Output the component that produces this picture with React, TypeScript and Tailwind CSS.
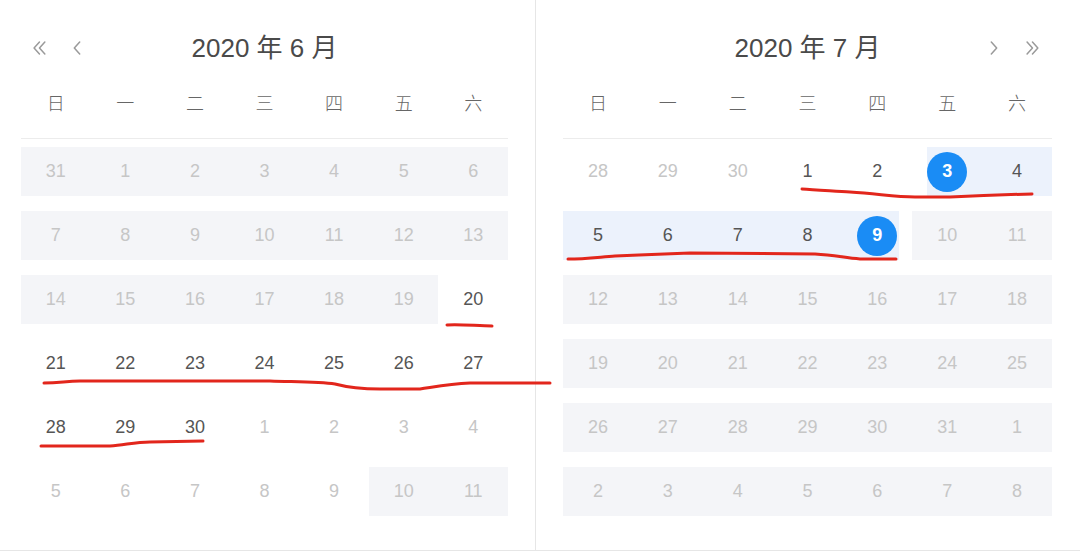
import React from "react";

type CellKind = "disabled" | "out" | "normal" | "range" | "start" | "end";
type Cell = { d: number; k: CellKind };

const WEEK = ["日", "一", "二", "三", "四", "五", "六"];

const row = (days: number[], kinds: CellKind[]): Cell[] =>
  days.map((d, i) => ({ d, k: kinds[i] }));

const D: CellKind = "disabled";
const O: CellKind = "out";
const N: CellKind = "normal";
const R: CellKind = "range";

const JUNE: Cell[][] = [
  row([31, 1, 2, 3, 4, 5, 6], [D, D, D, D, D, D, D]),
  row([7, 8, 9, 10, 11, 12, 13], [D, D, D, D, D, D, D]),
  row([14, 15, 16, 17, 18, 19, 20], [D, D, D, D, D, D, N]),
  row([21, 22, 23, 24, 25, 26, 27], [N, N, N, N, N, N, N]),
  row([28, 29, 30, 1, 2, 3, 4], [N, N, N, O, O, O, O]),
  row([5, 6, 7, 8, 9, 10, 11], [O, O, O, O, O, D, D]),
];

const JULY: Cell[][] = [
  row([28, 29, 30, 1, 2, 3, 4], [O, O, O, N, N, "start", R]),
  row([5, 6, 7, 8, 9, 10, 11], [R, R, R, R, "end", D, D]),
  row([12, 13, 14, 15, 16, 17, 18], [D, D, D, D, D, D, D]),
  row([19, 20, 21, 22, 23, 24, 25], [D, D, D, D, D, D, D]),
  row([26, 27, 28, 29, 30, 31, 1], [D, D, D, D, D, D, D]),
  row([2, 3, 4, 5, 6, 7, 8], [D, D, D, D, D, D, D]),
];

function Chevron({ dir, double }: { dir: "left" | "right"; double?: boolean }) {
  const p = dir === "left" ? "M6 1 L1 6.5 L6 12" : "M1 1 L6 6.5 L1 12";
  return (
    <svg width={double ? 14 : 8} height="14" viewBox={double ? "0 0 13 13" : "0 0 7 13"} fill="none">
      <path d={p} stroke="#9a9a9a" strokeWidth="1.4" strokeLinecap="round" strokeLinejoin="round" />
      {double && (
        <path
          d={p}
          transform="translate(5 0)"
          stroke="#9a9a9a"
          strokeWidth="1.4"
          strokeLinecap="round"
          strokeLinejoin="round"
        />
      )}
    </svg>
  );
}

function DayCell({ c }: { c: Cell }) {
  if (c.k === "start" || c.k === "end") {
    return (
      <div className="relative flex-1 flex items-center justify-center">
        <div
          className={
            c.k === "start"
              ? "absolute top-0 bottom-0 left-[15px] right-0 bg-[#ecf2fc]"
              : "absolute top-0 bottom-0 left-0 right-[13px] bg-[#ecf2fc]"
          }
        />
        <div className="relative w-[40px] h-[40px] rounded-full bg-[#1a8cf5] flex items-center justify-center text-white text-[18px] font-semibold">
          {c.d}
        </div>
      </div>
    );
  }
  const bg =
    c.k === "disabled" ? "bg-[#f4f5f8]" : c.k === "range" ? "bg-[#ecf2fc]" : "bg-white";
  const fg = c.k === "normal" || c.k === "range" ? "text-[#555555]" : "text-[#c6c6c6]";
  return (
    <div className={`flex-1 flex items-center justify-center text-[18px] ${bg} ${fg}`}>
      {c.d}
    </div>
  );
}

function Panel({
  title,
  weeks,
  side,
}: {
  title: string;
  weeks: Cell[][];
  side: "left" | "right";
}) {
  return (
    <div
      className={
        side === "left"
          ? "w-[536px] border-r border-[#e6e6e6] pl-[21px] pr-[27px]"
          : "flex-1 pl-[27px] pr-[28px]"
      }
    >
      <div className="mt-[20px] h-[56px] grid grid-cols-[1fr_auto_1fr] items-center">
        <div className="flex items-center gap-[26px] pl-[12px]">
          {side === "left" && (
            <>
              <Chevron dir="left" double />
              <Chevron dir="left" />
            </>
          )}
        </div>
        <div className="text-[26px] text-[#4a4a4a]">{title}</div>
        <div className="flex items-center justify-end gap-[28px] pr-[12px]">
          {side === "right" && (
            <>
              <Chevron dir="right" />
              <Chevron dir="right" double />
            </>
          )}
        </div>
      </div>
      <div className="h-[56px] flex items-center">
        {WEEK.map((w) => (
          <div key={w} className="flex-1 text-center text-[18px] font-light text-[#666666]">
            {w}
          </div>
        ))}
      </div>
      <div className="mt-[6px] h-px bg-[#ececec]" />
      <div className="mt-[8px] flex flex-col gap-[15px]">
        {weeks.map((r, i) => (
          <div key={i} className="h-[49px] flex">
            {r.map((c, j) => (
              <DayCell key={j} c={c} />
            ))}
          </div>
        ))}
      </div>
    </div>
  );
}

export default function App() {
  return (
    <div
      className="relative w-[1080px] h-[552px] bg-white overflow-hidden"
      style={{ fontFamily: '"Liberation Sans", "Noto Sans CJK SC", sans-serif' }}
    >
      <div className="flex h-[551px] border-b border-[#e6e6e6]">
        <Panel title="2020 年 6 月" weeks={JUNE} side="left" />
        <Panel title="2020 年 7 月" weeks={JULY} side="right" />
      </div>
      {/* hand-drawn red marks */}
      <svg
        className="absolute inset-0 pointer-events-none"
        width="1080"
        height="552"
        viewBox="0 0 1080 552"
        fill="none"
        stroke="#e2261c"
        strokeWidth="3"
        strokeLinecap="round"
        strokeLinejoin="round"
      >
        <path d="M447 325 C460 324 478 326 492 326" />
        <path d="M44 383 C60 383 66 381 80 381 L270 381 C300 382 320 382 335 384 C350 388 360 389 380 389 L420 389 C440 386 450 384 470 383 L550 383" />
        <path d="M41 446 L110 446 C125 445 135 442 150 442 L203 441" />
        <path d="M802 189 C815 190 835 191 850 192 C880 194 895 197 915 197 L950 197 C970 196 990 195 1032 194" />
        <path d="M568 259 C585 259 600 257 615 256 C640 255 660 254 690 253 L815 254 C835 255 845 258 860 259 L896 259" />
      </svg>
    </div>
  );
}
